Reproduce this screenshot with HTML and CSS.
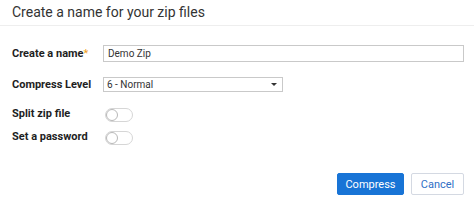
FILE: index.html
```html
<!DOCTYPE html>
<html>
<head>
<meta charset="utf-8">
<link rel="stylesheet" href="styles.css">
</head>
<body>
<div class="dialog">
  <div class="header">Create a name for your zip files</div>
  <div class="form">
    <div class="row row-name">
      <label class="label">Create a name<span class="req">*</span></label>
      <div class="input">Demo Zip</div>
    </div>
    <div class="row row-level">
      <label class="label">Compress Level</label>
      <div class="select"><span>6 - Normal</span><span class="caret"></span></div>
    </div>
    <div class="row row-split">
      <label class="label">Split zip file</label>
      <div class="toggle"><span class="knob"></span></div>
    </div>
    <div class="row row-pass">
      <label class="label">Set a password</label>
      <div class="toggle"><span class="knob"></span></div>
    </div>
  </div>
  <div class="actions">
    <button class="btn primary">Compress</button>
    <button class="btn secondary">Cancel</button>
  </div>
</div>
</body>
</html>
```
FILE: styles.css
```css
html, body {
  margin: 0;
  padding: 0;
  background: #fff;
}
body {
  font-family: Roboto, "Liberation Sans", sans-serif;
  color: #222;
  width: 474px;
  height: 201px;
  overflow: hidden;
}
.header {
  height: 25px;
  line-height: 24px;
  padding: 0 12px;
  font-size: 14px;
  color: #333;
  border-bottom: 1px solid #eeeeee;
}
.form {
  padding: 0 10px 0 12px;
}
.row {
  display: grid;
  grid-template-columns: 91px 1fr;
  align-items: center;
}
.row-name { margin-top: 19px; height: 17px; }
.row-level { margin-top: 15px; height: 15px; }
.row-split { margin-top: 15px; height: 15px; }
.row-pass { margin-top: 8px; height: 15px; }
.label {
  font-size: 11px;
  font-weight: bold;
  color: #1e1e1e;
}
.row-split .label { margin-top: -3px; }
.row-pass .label { margin-top: -3px; }
.req { color: #f0a020; font-weight: normal; }
.input {
  box-sizing: border-box;
  height: 17px;
  width: 361px;
  border: 1px solid #c9c9c9;
  padding: 0 4px;
  font-size: 10px;
  line-height: 15px;
  color: #333;
}
.select {
  box-sizing: border-box;
  height: 15px;
  width: 180px;
  border: 1px solid #c9c9c9;
  padding: 0 5px 0 3px;
  font-size: 10px;
  line-height: 13px;
  color: #333;
  display: flex;
  justify-content: space-between;
  align-items: center;
}
.caret {
  width: 0;
  height: 0;
  border-left: 3px solid transparent;
  border-right: 3px solid transparent;
  border-top: 3px solid #333;
}
.toggle {
  box-sizing: border-box;
  width: 28px;
  height: 14px;
  margin-left: 2px;
  border: 1px solid #d6d6d6;
  border-radius: 7px;
  position: relative;
  background: #fff;
}
.knob {
  position: absolute;
  left: 0;
  top: 0;
  box-sizing: border-box;
  width: 12px;
  height: 12px;
  border-radius: 50%;
  border: 1.5px solid #b8b8b8;
  background: #fff;
}
.actions {
  display: flex;
  justify-content: flex-end;
  gap: 7px;
  padding-right: 10px;
  margin-top: 28px;
}
.btn {
  font-family: Roboto, "Liberation Sans", sans-serif;
  font-size: 11px;
  height: 22px;
  border-radius: 2px;
  box-sizing: border-box;
  padding: 0;
  cursor: pointer;
}
.primary {
  width: 67px;
  background: #1874d6;
  border: 1px solid #1874d6;
  color: #fff;
}
.secondary {
  width: 53px;
  background: #fff;
  border: 1px solid #d4d9e2;
  color: #2f6fc6;
}
```
